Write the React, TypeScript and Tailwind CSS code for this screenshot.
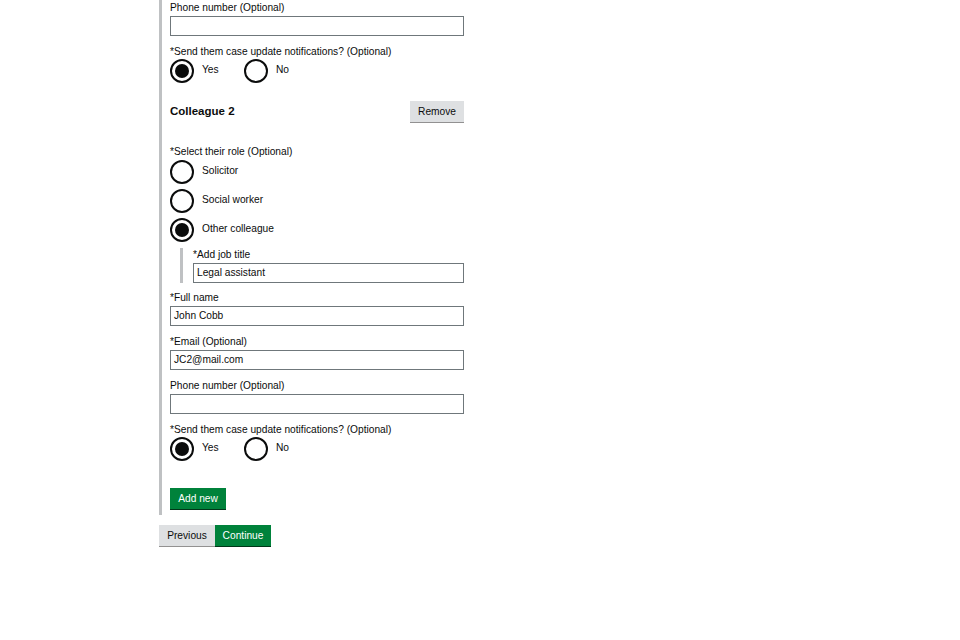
import React from "react";

const font = { fontFamily: '"Liberation Sans", Arial, sans-serif' };

const Label = ({ children }: { children: React.ReactNode }) => (
  <div className="text-[10.2px] leading-[13px] text-[#0b0c0c] mb-[2px]">{children}</div>
);

const TextInput = ({ value = "", width = "w-[294px]" }: { value?: string; width?: string }) => (
  <div
    className={`${width} h-[20px] border border-[#6f777b] bg-white px-[3px] text-[10.2px] leading-[18px] text-[#0b0c0c]`}
  >
    {value}
  </div>
);

const Radio = ({ checked, label }: { checked?: boolean; label: string }) => (
  <div className="flex items-start gap-[8px]">
    <div className="w-[24px] h-[24px] rounded-full border-2 border-[#0b0c0c] bg-white flex items-center justify-center">
      {checked && <div className="w-[14px] h-[14px] rounded-full bg-[#0b0c0c]" />}
    </div>
    <span className="text-[10.2px] leading-[13px] pt-[4px] text-[#0b0c0c]">{label}</span>
  </div>
);

const Field = ({ label, value }: { label: string; value?: string }) => (
  <div className="mb-[9px]">
    <Label>{label}</Label>
    <TextInput value={value} />
  </div>
);

const Notifications = () => (
  <div>
    <Label>*Send them case update notifications? (Optional)</Label>
    <div className="flex gap-[20px] mt-[-1px]">
      <div className="w-[54px]">
        <Radio checked label="Yes" />
      </div>
      <Radio label="No" />
    </div>
  </div>
);

export default function App() {
  return (
    <div className="w-[960px] h-[640px] bg-white overflow-hidden" style={font}>
      <div className="ml-[159px] w-[310px]">
        {/* colleague list */}
        <div className="border-l-[3px] border-[#bfc1c3] pl-[8px] pt-[1px] pb-[6px]">
          <Field label="Phone number (Optional)" />
          <Notifications />

          <div className="flex items-center justify-between w-[294px] mt-[18px]">
            <span className="text-[11.5px] font-bold text-[#0b0c0c]">Colleague 2</span>
            <button className="w-[54px] h-[21px] bg-[#dee0e2] shadow-[0_1px_0_#929191] text-[10.2px] text-[#0b0c0c]">
              Remove
            </button>
          </div>

          <div className="mt-[23px]">
            <Label>*Select their role (Optional)</Label>
            <div className="flex flex-col gap-[5px]">
              <Radio label="Solicitor" />
              <Radio label="Social worker" />
              <Radio checked label="Other colleague" />
            </div>
          </div>

          <div className="ml-[10px] mt-[6px] mb-[8px] border-l-[3px] border-[#bfc1c3] pl-[10px]">
            <Label>*Add job title</Label>
            <TextInput value="Legal assistant" width="w-[271px]" />
          </div>

          <Field label="*Full name" value="John Cobb" />
          <Field label="*Email (Optional)" value="JC2@mail.com" />
          <Field label="Phone number (Optional)" />
          <Notifications />

          <button className="mt-[27px] w-[56px] h-[21px] bg-[#00823b] shadow-[0_1px_0_#003618] text-[10.2px] text-white">
            Add new
          </button>
        </div>

        <div className="flex mt-[10px]">
          <button className="w-[56px] h-[21px] bg-[#dee0e2] shadow-[0_1px_0_#929191] text-[10.2px] text-[#0b0c0c]">
            Previous
          </button>
          <button className="w-[56px] h-[21px] bg-[#00823b] shadow-[0_1px_0_#003618] text-[10.2px] text-white">
            Continue
          </button>
        </div>
      </div>
    </div>
  );
}
